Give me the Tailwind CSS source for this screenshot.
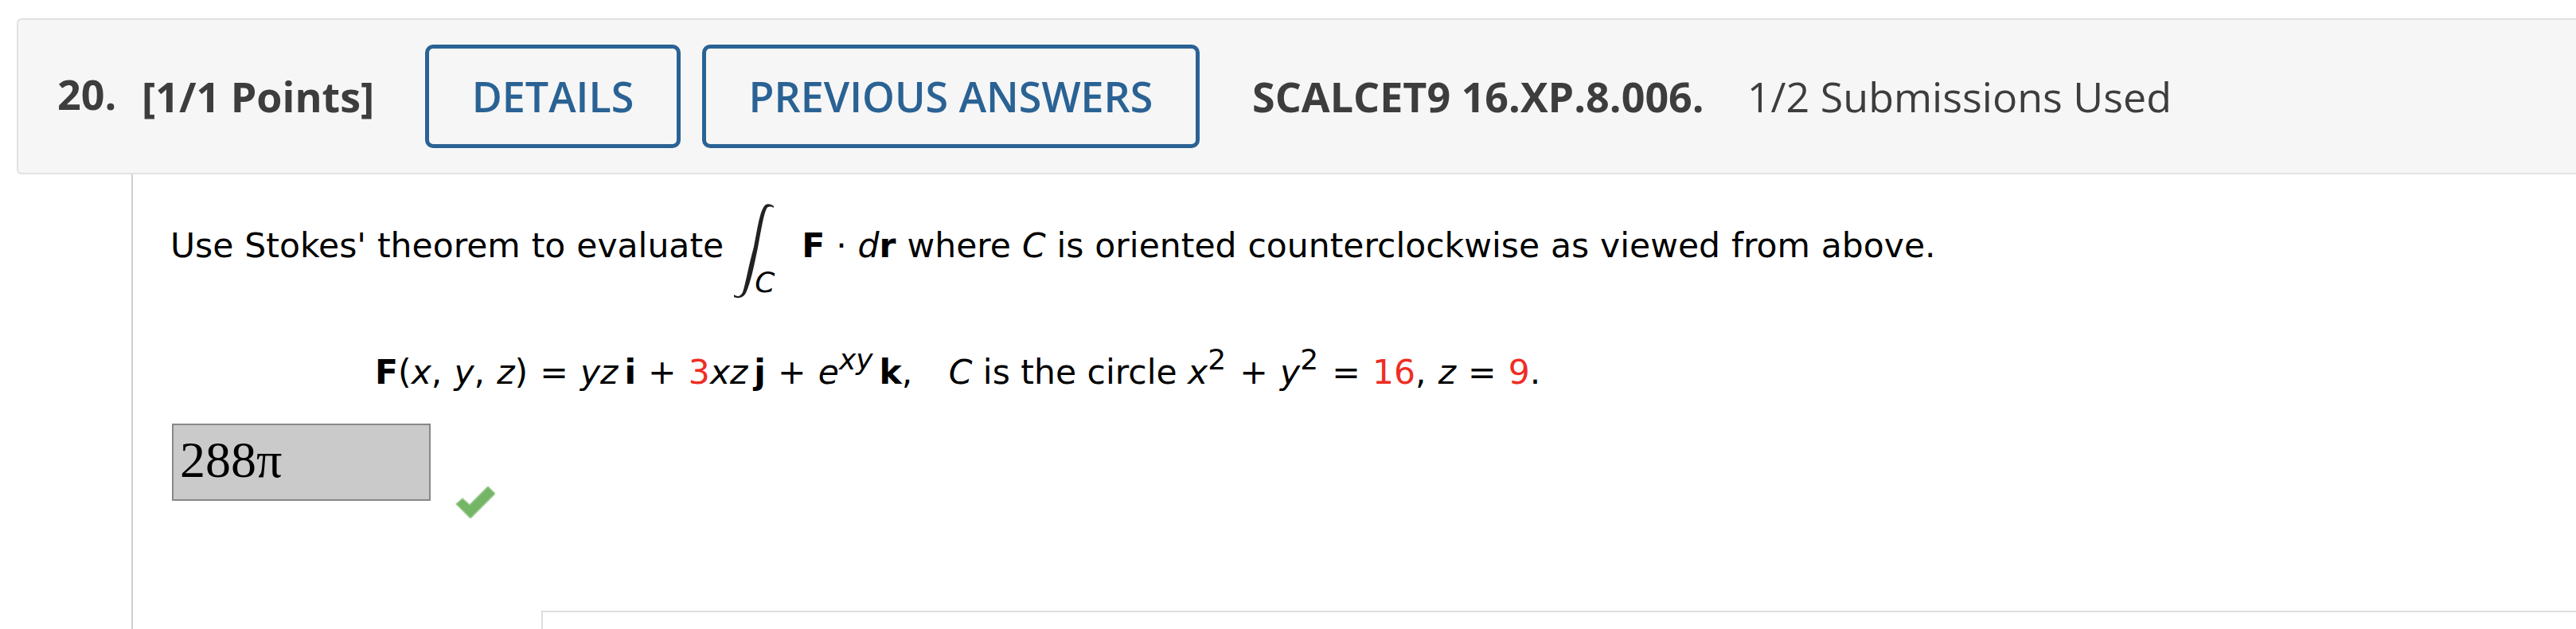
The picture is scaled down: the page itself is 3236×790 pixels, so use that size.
<!DOCTYPE html>
<html lang="en">
<head>
    <meta charset="UTF-8">
    <title>Question 20</title>
    <script src="https://cdn.jsdelivr.net/npm/@tailwindcss/browser@4"></script>
</head>
<body class="bg-white h-[790px] overflow-hidden">
    <!-- question header -->
    <div class="mt-[23px] ml-[21px] h-[196px] flex items-center bg-[#f6f6f6] border-2 border-r-0 border-[#e2e2e2] rounded-l-md pl-[49px] text-[#3d3d3d] text-[52px] font-['Open_Sans',sans-serif]">
        <span class="font-bold w-[106px] -mt-[6px]">20.</span>
        <span class="font-bold w-[356px]">[1/1 Points]</span>
        <button class="w-[321px] h-[130px] border-[5px] border-[#2a6294] rounded-[10px] text-[#2a6294] font-semibold">DETAILS</button>
        <button class="ml-[27px] w-[625px] h-[130px] border-[5px] border-[#2a6294] rounded-[10px] text-[#2a6294] font-semibold">PREVIOUS ANSWERS</button>
        <span class="ml-[66px] font-bold">SCALCET9 16.XP.8.006.</span>
        <span class="ml-[54px]">1/2 Submissions Used</span>
    </div>

    <!-- question body -->
    <div class="ml-[165px] h-[571px] border-l-2 border-[#d0d0d0] pl-[49px] flex flex-col font-['DejaVu_Sans',sans-serif] text-[42.5px] text-black">
        <div class="flex items-start h-[160px] pt-[36px] leading-[50px] whitespace-pre [word-spacing:0.4px]">
            <span class="mt-[29px] -ml-[2px]">Use Stokes' theorem to evaluate</span>
            <span class="relative w-[98px] h-[120px]">
                <svg class="absolute left-[13px] top-0" width="50" height="120" viewBox="0 0 50 120">
                    <path d="M0 115 C4 118 8 118 11 112 C15 100 18 80 25 55 C29 35 32 12 38 4 C41 0 46 1 50 4 L50 6 C46 4 43 4 41 7 C37 15 34 35 30 56 C25 80 21 100 15 113 C11 120 4 120 0 118 Z" fill="#222222"/>
                </svg>
                <i class="absolute left-[39px] top-[80px] text-[36px] leading-[40px]">C</i>
            </span>
            <span class="mt-[29px]"><b>F</b> · <i>d</i><b>r</b> where <i>C</i> is oriented counterclockwise as viewed from above.</span>
        </div>
        <div class="pl-[255px] h-[153px] pt-[64px] leading-[50px] whitespace-pre [word-spacing:1.6px]"><b>F</b>(<i>x</i>, <i>y</i>, <i>z</i>) = <i>yz</i><b class="ml-[8px]">i</b> + <span class="text-[#ee2d24]">3</span><i>xz</i><b class="ml-[8px]">j</b> + <i>e</i><sup class="text-[36px] leading-none"><i>xy</i></sup><b class="ml-[8px]">k</b>,   <span class="[word-spacing:0px]"><i>C</i> is the circle </span><i>x</i><sup class="text-[36px] leading-none mr-[2px]">2</sup> + <i>y</i><sup class="text-[36px] leading-none mr-[2px]">2</sup> = <span class="text-[#ee2d24]">16</span>, <i>z</i> = <span class="text-[#ee2d24]">9</span>.</div>
        <div class="flex items-start">
            <div class="w-[325px] h-[97px] bg-[#cacaca] border-2 border-[#888888] pl-[8px] font-['Liberation_Serif',serif] text-[64px] leading-[88px]">288π</div>
            <svg class="ml-[31px] mt-[79px] blur-[0.7px]" width="50" height="40" viewBox="0 0 50 40">
                <path d="M1 22 L9 15 L18 23 L41 0 L50 9 L19 40 Z" fill="#74b566" stroke="#a5d09a" stroke-width="1.5"/>
            </svg>
        </div>
    </div>

    <!-- start of the next panel, cut off by the window -->
    <div class="absolute left-[680px] top-[767px] right-0 bottom-0 border-l-2 border-t-2 border-[#dedede]"></div>
</body>
</html>
